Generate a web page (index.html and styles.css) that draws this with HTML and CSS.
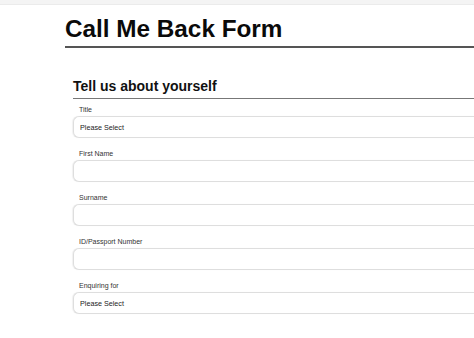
FILE: index.html
```html
<!DOCTYPE html>
<html lang="en">
<head>
<meta charset="utf-8">
<title>Call Me Back Form</title>
<link rel="stylesheet" href="styles.css">
</head>
<body>
<div class="topbar"></div>
<main class="page">
  <h1 class="page-title">Call Me Back Form</h1>
  <form class="form">
    <h2 class="section-title">Tell us about yourself</h2>
    <div class="field">
      <label class="field-label" for="title">Title</label>
      <select class="field-control field-select" id="title"><option>Please Select</option></select>
    </div>
    <div class="field">
      <label class="field-label" for="first">First Name</label>
      <input class="field-control" id="first" type="text">
    </div>
    <div class="field">
      <label class="field-label" for="surname">Surname</label>
      <input class="field-control" id="surname" type="text">
    </div>
    <div class="field">
      <label class="field-label" for="idnum">ID/Passport Number</label>
      <input class="field-control" id="idnum" type="text">
    </div>
    <div class="field">
      <label class="field-label" for="enquiry">Enquiring for</label>
      <select class="field-control field-select" id="enquiry"><option>Please Select</option></select>
    </div>
  </form>
</main>
</body>
</html>
```
FILE: styles.css
```css
html, body {
  margin: 0;
  padding: 0;
  background: #ffffff;
  overflow: hidden;
}
body {
  font-family: "Liberation Sans", Arial, sans-serif;
  color: #111;
  width: 474px;
  height: 338px;
}
.topbar {
  height: 4px;
  background: #f4f4f4;
  border-bottom: 1px solid #ebebeb;
}
.page {
  padding-left: 65px;
  width: 409px;
}
.page-title {
  margin: 10px 0 0 0;
  font-size: 24.3px;
  line-height: 28px;
  font-weight: bold;
  color: #0a0a0a;
  padding: 0 0 3px 0;
  border-bottom: 2px solid #555;
}
.form {
  margin: 0 0 0 8px;
  display: flex;
  flex-direction: column;
}
.section-title {
  margin: 29px 0 0 0;
  font-size: 14px;
  line-height: 18px;
  font-weight: bold;
  color: #111;
  padding: 0 0 3px 0;
  border-bottom: 1px solid #777;
}
.field {
  display: flex;
  flex-direction: column;
  margin-top: 6px;
}
.field + .field {
  margin-top: 11px;
}
.field-label {
  font-size: 7px;
  line-height: 9px;
  color: #333;
  padding-left: 6px;
  margin-bottom: 2px;
}
.field-control {
  box-sizing: border-box;
  height: 22px;
  width: 100%;
  margin: 0;
  border: 1px solid #dedede;
  border-right: 0;
  border-radius: 6px 0 0 6px;
  background: #fff;
  box-shadow: -1px 0 1px rgba(0,0,0,0.06);
  font-family: "Liberation Sans", Arial, sans-serif;
  font-size: 7.2px;
  color: #222;
  padding: 0 0 0 6px;
  outline: none;
}
.field-select {
  -webkit-appearance: none;
  appearance: none;
}
```
